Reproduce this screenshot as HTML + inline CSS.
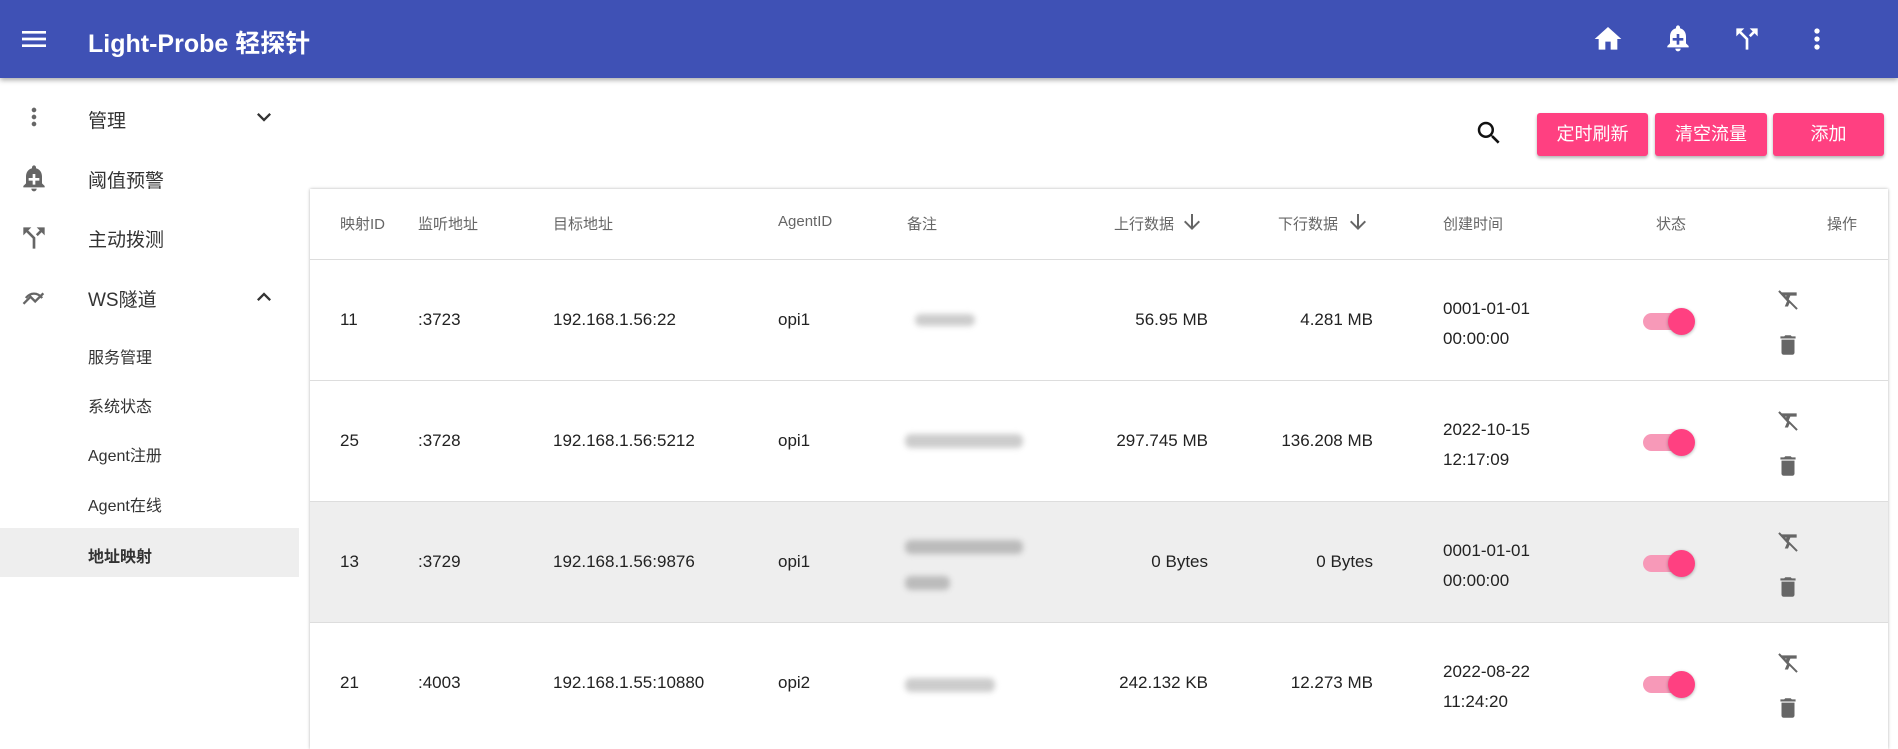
<!DOCTYPE html>
<html><head><meta charset="utf-8"><style>
*{box-sizing:border-box;margin:0;padding:0}
body{width:1898px;height:741px;overflow:hidden;background:#fff;font-family:"Liberation Sans","Noto Sans CJK SC",sans-serif;position:relative;color:#212121}
.hdr{position:absolute;left:0;top:0;width:1898px;height:78px;background:#3f51b5;box-shadow:0 2px 5px rgba(0,0,0,.35);z-index:2}
.hdr .t{position:absolute;left:88px;top:24px;font-size:25px;font-weight:bold;color:#fff}
.ic{position:absolute}
.mi{position:absolute;left:88px;font-size:19px;color:#333}
.si{position:absolute;left:88px;font-size:16px;color:#333}
.act{position:absolute;left:0;top:528px;width:299px;height:49px;background:#eee}
.btn{position:absolute;top:113px;height:43px;background:#ff4081;color:#fff;font-size:18px;text-align:center;line-height:43px;border-radius:3px;box-shadow:0 2px 3px rgba(0,0,0,.3)}
.card{position:absolute;left:310px;top:189px;width:1578px;height:560px;box-shadow:0 0 3px rgba(0,0,0,.3);background:#fff}
.th{position:absolute;top:213px;font-size:15px;color:#666}
.row{position:absolute;left:310px;width:1578px;height:121px;border-top:1px solid #ddd}
.c{position:absolute;font-size:17px;color:#222}
.r{text-align:right}
.tog{position:absolute;width:50px;height:17px;border-radius:9px;background:#f799b8}
.tog::after{content:"";position:absolute;right:-2px;top:-5px;width:27px;height:27px;border-radius:50%;background:#ff4081;box-shadow:0 1px 3px rgba(0,0,0,.3)}
.blur{position:absolute;background:#ccc;filter:blur(3px);border-radius:6px}
</style></head><body>
<div class="hdr">
<svg class="ic" style="left:18px;top:23px" width="32" height="32" viewBox="0 0 24 24"><path d="M3 6h18v2H3zm0 5h18v2H3zm0 5h18v2H3z" fill="#fff"/></svg>
<div class="t">Light-Probe 轻探针</div>
<svg class="ic" style="left:1592px;top:23px" width="32" height="32" viewBox="0 0 24 24"><path d="M10 20v-6h4v6h5v-8h3L12 3 2 12h3v8z" fill="#fff"/></svg>
<svg class="ic" style="left:1662px;top:22px" width="32" height="32" viewBox="0 0 24 24"><path d="M12 22c1.1 0 2-.9 2-2h-4c0 1.1.9 2 2 2zm6-6v-5c0-3.1-1.6-5.6-4.5-6.3V4c0-.8-.7-1.5-1.5-1.5s-1.5.7-1.5 1.5v.7C7.6 5.4 6 7.9 6 11v5l-2 2v1h16v-1l-2-2zm-2-2h-3v3h-2v-3H8v-2h3V9h2v3h3v2z" fill="#fff"/></svg>
<svg class="ic" style="left:1731px;top:23px" width="32" height="32" viewBox="0 0 24 24"><path d="M14 4l2.3 2.3-2.9 2.9 1.4 1.4 2.9-2.9L20 10V4zM10 4H4v6l2.3-2.3 4.7 4.7V20h2v-8.4l-5.3-5.3z" fill="#fff"/></svg>
<svg class="ic" style="left:1801px;top:23px" width="32" height="32" viewBox="0 0 24 24"><path d="M12 8a2 2 0 100-4 2 2 0 000 4zm0 2a2 2 0 100 4 2 2 0 000-4zm0 6a2 2 0 100 4 2 2 0 000-4z" fill="#fff"/></svg>
</div>
<div class="act"></div>
<svg class="ic" style="left:20px;top:103px" width="28" height="28" viewBox="0 0 24 24"><path d="M12 8a2 2 0 100-4 2 2 0 000 4zm0 2a2 2 0 100 4 2 2 0 000-4zm0 6a2 2 0 100 4 2 2 0 000-4z" fill="#666"/></svg>
<div class="mi" style="top:106px">管理</div>
<svg class="ic" style="left:250px;top:103px" width="28" height="28" viewBox="0 0 24 24"><path d="M7.4 8.6L12 13.2l4.6-4.6L18 10l-6 6-6-6z" fill="#333"/></svg>
<svg class="ic" style="left:18px;top:162px" width="32" height="32" viewBox="0 0 24 24"><path d="M12 22c1.1 0 2-.9 2-2h-4c0 1.1.9 2 2 2zm6-6v-5c0-3.1-1.6-5.6-4.5-6.3V4c0-.8-.7-1.5-1.5-1.5s-1.5.7-1.5 1.5v.7C7.6 5.4 6 7.9 6 11v5l-2 2v1h16v-1l-2-2zm-2-2h-3v3h-2v-3H8v-2h3V9h2v3h3v2z" fill="#666"/></svg>
<div class="mi" style="top:166px">阈值预警</div>
<svg class="ic" style="left:18px;top:222px" width="32" height="32" viewBox="0 0 24 24"><path d="M14 4l2.3 2.3-2.9 2.9 1.4 1.4 2.9-2.9L20 10V4zM10 4H4v6l2.3-2.3 4.7 4.7V20h2v-8.4l-5.3-5.3z" fill="#666"/></svg>
<div class="mi" style="top:225px">主动拨测</div>
<svg class="ic" style="left:20px;top:284px" width="28" height="28" viewBox="0 0 24 24"><path d="M3 17l6-6 4 4 7-7" stroke="#666" stroke-width="2" fill="none"/><path d="M5 12c4-5 10-5 14 0" stroke="#666" stroke-width="2" fill="none"/></svg>
<div class="mi" style="top:285px">WS隧道</div>
<svg class="ic" style="left:250px;top:283px" width="28" height="28" viewBox="0 0 24 24"><path d="M7.4 15.4L12 10.8l4.6 4.6L18 14l-6-6-6 6z" fill="#333"/></svg>
<div class="si" style="top:344px">服务管理</div>
<div class="si" style="top:393px">系统状态</div>
<div class="si" style="top:442px">Agent注册</div>
<div class="si" style="top:492px">Agent在线</div>
<div class="si" style="top:543px;font-weight:bold">地址映射</div>
<svg class="ic" style="left:1474px;top:118px" width="30" height="30" viewBox="0 0 24 24"><path d="M15.5 14h-.79l-.28-.27A6.47 6.47 0 0016 9.5 6.5 6.5 0 109.5 16c1.61 0 3.09-.59 4.23-1.57l.27.28v.79l5 4.99L20.49 19l-4.99-5zm-6 0C7.01 14 5 11.99 5 9.5S7.01 5 9.5 5 14 7.01 14 9.5 11.99 14 9.5 14z" fill="#111"/></svg>
<div class="btn" style="left:1537px;width:111px">定时刷新</div>
<div class="btn" style="left:1655px;width:112px">清空流量</div>
<div class="btn" style="left:1773px;width:111px">添加</div>
<div class="card"></div>
<div class="th" style="left:340px">映射ID</div>
<div class="th" style="left:418px">监听地址</div>
<div class="th" style="left:553px">目标地址</div>
<div class="th" style="left:778px">AgentID</div>
<div class="th" style="left:907px">备注</div>
<div class="th" style="left:1114px">上行数据</div>
<svg class="ic" style="left:1180px;top:210px" width="24" height="24" viewBox="0 0 24 24"><path d="M20 12l-1.4-1.4-5.6 5.6V4h-2v12.2l-5.6-5.6L4 12l8 8z" fill="#666"/></svg>
<div class="th" style="left:1278px">下行数据</div>
<svg class="ic" style="left:1346px;top:210px" width="24" height="24" viewBox="0 0 24 24"><path d="M20 12l-1.4-1.4-5.6 5.6V4h-2v12.2l-5.6-5.6L4 12l8 8z" fill="#666"/></svg>
<div class="th" style="left:1443px">创建时间</div>
<div class="th" style="left:1656px">状态</div>
<div class="th" style="left:1827px">操作</div>

<div class="row" style="top:259px"></div>
<div class="row" style="top:380px"></div>
<div class="row" style="top:501px;background:#eee"></div>
<div class="row" style="top:622px"></div>

<div class="c" style="left:340px;top:310px">11</div><div class="c" style="left:418px;top:310px">:3723</div><div class="c" style="left:553px;top:310px">192.168.1.56:22</div><div class="c" style="left:778px;top:310px">opi1</div>
<div class="blur" style="left:915px;top:314px;width:60px;height:12px"></div>
<div class="c r" style="left:1050px;width:158px;top:310px">56.95 MB</div><div class="c r" style="left:1215px;width:158px;top:310px">4.281 MB</div>
<div class="c" style="left:1443px;top:294px;line-height:30px">0001-01-01<br>00:00:00</div>

<div class="c" style="left:340px;top:431px">25</div><div class="c" style="left:418px;top:431px">:3728</div><div class="c" style="left:553px;top:431px">192.168.1.56:5212</div><div class="c" style="left:778px;top:431px">opi1</div>
<div class="blur" style="left:905px;top:434px;width:118px;height:14px"></div>
<div class="c r" style="left:1050px;width:158px;top:431px">297.745 MB</div><div class="c r" style="left:1215px;width:158px;top:431px">136.208 MB</div>
<div class="c" style="left:1443px;top:415px;line-height:30px">2022-10-15<br>12:17:09</div>

<div class="c" style="left:340px;top:552px">13</div><div class="c" style="left:418px;top:552px">:3729</div><div class="c" style="left:553px;top:552px">192.168.1.56:9876</div><div class="c" style="left:778px;top:552px">opi1</div>
<div class="blur" style="left:905px;top:540px;width:118px;height:14px;background:#bbb"></div>
<div class="blur" style="left:905px;top:576px;width:45px;height:14px;background:#bbb"></div>
<div class="c r" style="left:1050px;width:158px;top:552px">0 Bytes</div><div class="c r" style="left:1215px;width:158px;top:552px">0 Bytes</div>
<div class="c" style="left:1443px;top:536px;line-height:30px">0001-01-01<br>00:00:00</div>

<div class="c" style="left:340px;top:673px">21</div><div class="c" style="left:418px;top:673px">:4003</div><div class="c" style="left:553px;top:673px">192.168.1.55:10880</div><div class="c" style="left:778px;top:673px">opi2</div>
<div class="blur" style="left:905px;top:678px;width:90px;height:14px"></div>
<div class="c r" style="left:1050px;width:158px;top:673px">242.132 KB</div><div class="c r" style="left:1215px;width:158px;top:673px">12.273 MB</div>
<div class="c" style="left:1443px;top:657px;line-height:30px">2022-08-22<br>11:24:20</div>

<div class="tog" style="left:1643px;top:313px"></div>
<div class="tog" style="left:1643px;top:434px"></div>
<div class="tog" style="left:1643px;top:555px"></div>
<div class="tog" style="left:1643px;top:676px"></div>

<svg width="0" height="0" style="position:absolute"><defs>
<symbol id="fx" viewBox="0 0 24 24"><path d="M3 4.3L4.3 3 21 19.7 19.7 21l-6.3-6.3L12 18H9l2.1-4.9L3 4.3zM6 5h14v3h-5.8l-1.6 3.7L10 9.1 10.8 8H9L6 5z" fill="#666"/></symbol>
<symbol id="tr" viewBox="0 0 24 24"><path d="M6 19c0 1.1.9 2 2 2h8c1.1 0 2-.9 2-2V7H6v12zM19 4h-3.5l-1-1h-5l-1 1H5v2h14V4z" fill="#666"/></symbol>
</defs></svg>
<svg class="ic" style="left:1775px;top:287px" width="26" height="26"><use href="#fx"/></svg>
<svg class="ic" style="left:1775px;top:332px" width="26" height="26"><use href="#tr"/></svg>
<svg class="ic" style="left:1775px;top:408px" width="26" height="26"><use href="#fx"/></svg>
<svg class="ic" style="left:1775px;top:453px" width="26" height="26"><use href="#tr"/></svg>
<svg class="ic" style="left:1775px;top:529px" width="26" height="26"><use href="#fx"/></svg>
<svg class="ic" style="left:1775px;top:574px" width="26" height="26"><use href="#tr"/></svg>
<svg class="ic" style="left:1775px;top:650px" width="26" height="26"><use href="#fx"/></svg>
<svg class="ic" style="left:1775px;top:695px" width="26" height="26"><use href="#tr"/></svg>
</body></html>
